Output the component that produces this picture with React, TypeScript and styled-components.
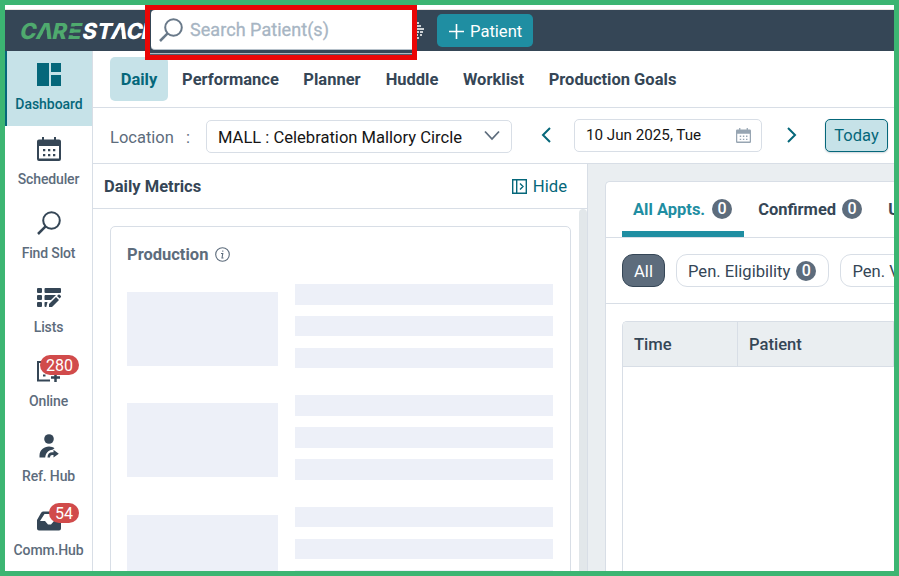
import React from "react";
import styled, { createGlobalStyle, css } from "styled-components";

const c = {
  navy: "#354656",
  teal: "#1f8ea2",
  deep: "#05677a",
  pale: "#c6e2e8",
  line: "#d8dee6",
  slate: "#5d6c7c",
  grey: "#eaeef1",
  skeleton: "#edf0f8",
};

const GlobalStyle = createGlobalStyle`
  * { box-sizing: border-box; }
  body { margin: 0; font-family: Roboto, "Liberation Sans", sans-serif; color: ${c.navy}; }
  svg { display: block; flex: none; }
`;

const Frame = styled.div`
  position: relative;
  width: 899px;
  height: 576px;
  border: 5px solid #3cb572;
  background: #fff;
  overflow: hidden;
  display: flex;
  flex-direction: column;
  white-space: nowrap;
`;

const Header = styled.header`
  flex: none;
  height: 46px;
  border-top: 4px solid #fff;
  background: ${c.navy};
  box-shadow: inset 0 1px 0 #ebe7e2;
  display: flex;
  align-items: center;
  padding: 1px 0 0 14px;
`;

const HeaderMenu = styled.div`
  margin-left: 250px;
  width: 8px;
`;

const AddPatient = styled.button`
  margin-left: 12px;
  width: 96px;
  height: 33px;
  border: 0;
  border-radius: 5px;
  background: ${c.teal};
  color: #fff;
  font: 400 16.6px Roboto, sans-serif;
  display: flex;
  align-items: center;
  gap: 6px;
  padding: 1px 0 0 12px;
`;

const SearchCallout = styled.div`
  position: absolute;
  left: 140px;
  top: 0;
  width: 272px;
  height: 55px;
  border: 5px solid #ea0606;
  background: linear-gradient(${c.navy} 0 43px, #aeb8c0 43px 44px, #4f606e 44px);
`;

const SearchField = styled.div`
  margin-left: 1px;
  height: 40px;
  background: #fff;
  border-bottom: 1px solid #b6c1ca;
  border-radius: 4px 0 0 4px;
  display: flex;
  align-items: center;
  gap: 7px;
  padding-left: 8px;
  color: #a7b5c3;
  font-size: 18px;
  letter-spacing: 0.05px;
  -webkit-text-stroke: 0.3px #a7b5c3;
`;

const Body = styled.div`
  flex: 1;
  display: flex;
  min-height: 0;
`;

const Sidebar = styled.nav`
  flex: none;
  width: 88px;
  border-right: 1px solid ${c.line};
  padding-bottom: 8px;
`;

const NavItem = styled.a<{ $active?: boolean }>`
  position: relative;
  height: ${(p) => (p.$active ? 75 : 74.15)}px;
  display: flex;
  flex-direction: column;
  align-items: center;
  padding-top: 11px;
  gap: ${(p) => (p.$active ? 6 : 8)}px;
  font-size: 14px;
  letter-spacing: ${(p) => (p.$active ? -0.05 : -0.15)}px;
  line-height: 20px;
  font-weight: 500;
  color: ${(p) => (p.$active ? c.deep : c.slate)};
  ${(p) => p.$active && css`padding-left: 1px; background: ${c.pale}; box-shadow: inset 2px 0 ${c.deep};`}
`;

const NavBadge = styled.span`
  position: absolute;
  right: 13px;
  top: 6.4px;
  height: 20px;
  padding: 0 6px;
  border-radius: 10px;
  background: #d14b4b;
  color: #fff;
  font-size: 16px;
  letter-spacing: 0;
  font-weight: 400;
  line-height: 21px;
`;

const Main = styled.main`
  flex: 1;
  min-width: 0;
  display: flex;
  flex-direction: column;
`;

const Tabs = styled.div`
  flex: none;
  height: 57px;
  padding: 0 0 0 17px;
  border-bottom: 1px solid ${c.line};
  display: flex;
  align-items: center;
`;

const Tab = styled.a<{ $active?: boolean; $w: number }>`
  width: ${(p) => p.$w}px;
  height: 44px;
  border-radius: 5px;
  line-height: 45px;
  text-align: center;
  font-size: 16.5px;
  font-weight: 700;
  color: ${(p) => (p.$active ? c.deep : c.navy)};
  background: ${(p) => (p.$active ? c.pale : "transparent")};
`;

const Toolbar = styled.div`
  flex: none;
  height: 56px;
  border-bottom: 1px solid ${c.line};
  padding-left: 17px;
  display: flex;
  align-items: center;
`;

const Label = styled.span`
  width: 96px;
  padding-top: 4px;
  color: ${c.slate};
  font-size: 16.5px;
  word-spacing: 8px;
`;

const Field = styled.div<{ $w: number; $size: number; $date?: boolean }>`
  width: ${(p) => p.$w}px;
  height: 33px;
  margin-top: ${(p) => (p.$date ? -1 : 1)}px;
  border: 1px solid ${c.line};
  border-radius: 5px;
  padding: ${(p) => (p.$date ? "0 10px 0 11px" : "2px 11px 0")};
  display: flex;
  align-items: center;
  justify-content: space-between;
  font-size: ${(p) => p.$size}px;
  color: #151515;
`;

const Arrow = styled.svg<{ $next?: boolean }>`
  margin: ${(p) => (p.$next ? "-2px 28px 0 25px" : "-2px 23px 0 29px")};
`;

const Today = styled.button`
  width: 63px;
  height: 33px;
  margin-top: -1px;
  border: 1px solid ${c.deep};
  border-radius: 5px;
  background: ${c.pale};
  color: ${c.deep};
  padding: 0;
  font: 400 16.5px Roboto, sans-serif;
  box-shadow: 0 1px 2px #cbd3d9;
`;

const Content = styled.div`
  flex: 1;
  min-height: 0;
  display: flex;
`;

const Metrics = styled.section`
  flex: none;
  width: 495px;
  border-right: 1px solid ${c.line};
  display: flex;
  flex-direction: column;
`;

const MetricsHeader = styled.div`
  flex: none;
  height: 45px;
  border-bottom: 1px solid ${c.line};
  padding: 0 20px 0 11px;
  display: flex;
  align-items: center;
  justify-content: space-between;
  font-size: 16.5px;
  font-weight: 700;
`;

const Hide = styled.a`
  display: flex;
  align-items: center;
  gap: 6px;
  color: ${c.deep};
  font-size: 16.7px;
  font-weight: 400;
`;

const MetricsBody = styled.div`
  flex: 1;
  min-height: 0;
  overflow: hidden;
  display: flex;
`;

const MetricsCard = styled.div`
  margin: 17px 8px 0 17px;
  width: 461px;
  height: 500px;
  border: 1px solid ${c.line};
  border-radius: 5px;
  padding: 18px 17px 0 16px;
`;

const CardTitle = styled.h3`
  margin: 0 0 20px;
  height: 19px;
  display: flex;
  align-items: center;
  gap: 7px;
  color: ${c.slate};
  font-size: 16.5px;
  font-weight: 700;
`;

const SkeletonGroup = styled.div`
  height: 111.45px;
  padding-top: 8px;
  display: flex;
  justify-content: space-between;
`;

const SkeletonBlock = styled.div`
  width: 151px;
  height: 74px;
  background: ${c.skeleton};
`;

const SkeletonBars = styled.div`
  width: 258px;
  margin-top: -8px;
  display: flex;
  flex-direction: column;
  gap: 11.3px;
`;

const SkeletonBar = styled.div`
  height: 20.5px;
  background: ${c.skeleton};
`;

const ScrollThumb = styled.div`
  flex: none;
  width: 8px;
  background: #e2e7ea;
  border-radius: 4px 4px 0 0;
`;

const ApptArea = styled.section`
  flex: 1;
  min-width: 0;
  background: ${c.grey};
  padding: 17px 0 0 17px;
  display: flex;
`;

const ApptCard = styled.div`
  flex: 1;
  min-width: 0;
  overflow: hidden;
  background: #fff;
  border: solid ${c.line};
  border-width: 1px 0 0 1px;
  border-radius: 5px 0 0 0;
`;

const ApptTabs = styled.div`
  height: 56px;
  border-bottom: 1px solid ${c.line};
  padding-left: 16px;
  display: flex;
`;

const ApptTab = styled.a<{ $active?: boolean }>`
  flex: none;
  height: 55px;
  padding: 5px 12px 0 ${(p) => (p.$active ? 11 : 14)}px;
  border-bottom: 6px solid ${(p) => (p.$active ? c.teal : "transparent")};
  display: flex;
  align-items: center;
  gap: ${(p) => (p.$active ? 7 : 6)}px;
  font-size: 16.5px;
  font-weight: 700;
  color: ${(p) => (p.$active ? c.teal : c.navy)};
`;

const Count = styled.span`
  width: 20px;
  height: 20px;
  border-radius: 50%;
  background: ${c.slate};
  color: #fff;
  text-align: center;
  font-size: 16px;
  font-weight: 500;
  line-height: 20px;
`;

const Filters = styled.div`
  height: 66px;
  border-bottom: 1px solid ${c.line};
  padding: 16px 0 0 16px;
  display: flex;
  gap: 11px;
`;

const Chip = styled.button<{ $active?: boolean }>`
  flex: none;
  height: 33px;
  padding: 1px 12px 0 11px;
  ${(p) => p.$active && css`width: 43px; padding: 1px 0 0; justify-content: center;`}
  border: 1px solid ${(p) => (p.$active ? c.navy : c.line)};
  border-radius: 11px;
  background: ${(p) => (p.$active ? c.slate : "#fff")};
  color: ${(p) => (p.$active ? "#fff" : c.navy)};
  font: 400 16.6px Roboto, sans-serif;
  display: flex;
  align-items: center;
  gap: 6px;
`;

const Table = styled.div`
  margin: 17px 0 0 16px;
  height: 400px;
  border: solid ${c.line};
  border-width: 1px 0 0 1px;
  border-radius: 5px 0 0 0;
  overflow: hidden;
`;

const TableHead = styled.div`
  display: grid;
  grid-template-columns: 115px 1fr;
  height: 45px;
  background: ${c.grey};
  border-bottom: 1px solid ${c.line};
`;

const HeadCell = styled.div`
  border-right: 1px solid ${c.line};
  padding-left: 11px;
  line-height: 45px;
  font-size: 16.6px;
  font-weight: 500;
`;

const Logo = () => (
  <svg width="148" height="24" viewBox="0 0 148 24" fontFamily="Inter" fontWeight="800" fontSize="22">
    <g transform="translate(5 0) skewX(-12)">
      <g fill="#4faa6e">
        <text y="20" x="-0.7 15.2 31.6 47.2">CARE</text>
      </g>
      <g fill="#fff">
        <text y="20" x="61.4 76.2 90 105.500 120.500">STACK</text>
      </g>
      <g fill={c.navy}>
        <path d="M19.900 20.500 L22.800 11 L24.800 11 L27.800 20.500Z" />
        <path d="M94.700 20.500 L97.600 11 L99.600 11 L102.600 20.500Z" />
        <rect x="47.500" y="7.400" width="14" height="2.200" />
        <rect x="47.500" y="14" width="14" height="2.300" />
      </g>
    </g>
  </svg>
);

const Magnifier = ({ size, color, w = 2 }: { size: number; color: string; w?: number }) => (
  <svg width={size} height={size} viewBox="0 0 24 24" fill="none" stroke={color} strokeWidth={w}>
    <circle cx="14.5" cy="9.5" r="8.3" />
    <path d="M8.6 15.4 1 23" strokeWidth={w * 1.25} />
  </svg>
);

const DashboardIcon = () => (
  <svg width="24" height="26" viewBox="0 0 24 26" fill={c.deep}>
    <path d="M0 1h12v23H0zM14 1h10v9H14zM14 13h10v11H14z" />
  </svg>
);

const CalendarIcon = ({ size, color }: { size: number; color: string }) => (
  <svg width={size} height={size} viewBox="0 0 24 24" fill={color}>
    <path fillRule="evenodd" d="M2 2.5h3V0h2v2.5h10V0h2v2.5h3a2 2 0 0 1 2 2V22a2 2 0 0 1-2 2H2a2 2 0 0 1-2-2V4.500a2 2 0 0 1 2-2ZM2 9v12.500h20V9Z" />
    <path d="M6 12h2.300v2.300H6zM11 12h2.300v2.300H11zM16 12h2.300v2.300H16zM6 17h2.300v2.300H6zM11 17h2.300v2.300H11zM16 17h2.300v2.300H16z" />
  </svg>
);

const ListsIcon = () => (
  <svg width="24" height="24" viewBox="0 0 24 24" fill={c.navy}>
    <rect y="3" width="5" height="5" rx="1" />
    <rect y="10" width="5" height="5" rx="1" />
    <rect y="17" width="5" height="5" rx="1" />
    <rect x="7.500" y="3" width="16.500" height="5" rx="1" />
    <path d="M8 10h11l-5 5H8a1 1 0 0 1-.5-1v-3zM8 17h2.500L9.300 22H8.500a1 1 0 0 1-1-1v-3.500zM12 19l7-7 3 3-7 7h-3zM20 11l1.300-1.200a1 1 0 0 1 1.400 0l1 1a1 1 0 0 1 0 1.400L22.700 13.500z" />
  </svg>
);

const OnlineIcon = () => (
  <svg width="24" height="24" viewBox="0 0 24 24" fill="none" stroke={c.navy} strokeWidth="2">
    <path d="M4 3H1v18.500h12" />
    <path d="M14 18.500h9M18.500 14v9" strokeWidth="2.500" />
    <path d="M6 16.500h2.500" />
  </svg>
);

const ReferralIcon = () => (
  <svg width="24" height="24" viewBox="0 0 24 24" fill={c.navy}>
    <circle cx="12" cy="5" r="4.800" />
    <path d="M2.500 23.500v-2c0-5.500 4.500-9 9.500-9 2.300 0 4.200.7 5.500 1.800l-2 1.500c-4.500.5-6.800 3.500-7.300 7.700z" />
    <path d="M10.500 23.500c0-3.500 2-5.300 4.700-5.300h1.300v-2.500l5.300 4-5.300 3.700v-2.300h-1.200c-1.400 0-2 .7-2.300 2.400z" />
  </svg>
);

const InboxIcon = () => (
  <svg width="24" height="24" viewBox="0 0 24 24" fill={c.navy}>
    <path fillRule="evenodd" d="M6 3.500h12L24 14v6.500a2 2 0 0 1-2 2H2a2 2 0 0 1-2-2V12L4 5a3 3 0 0 1 2-1.500ZM7.500 6 3 13h5l3 3.500h3L17 13h4l-4-7Z" />
  </svg>
);

const Chevron = ({ w, h, d, color }: { w: number; h: number; d: string; color: string }) => (
  <svg width={w} height={h} viewBox={`0 0 ${w} ${h}`} fill="none" stroke={color} strokeWidth="1.8"><path d={d} /></svg>
);

const navItems = [
  { label: "Dashboard", icon: <DashboardIcon />, active: true },
  { label: "Scheduler", icon: <CalendarIcon size={24} color={c.navy} /> },
  { label: "Find Slot", icon: <Magnifier size={24} color={c.navy} /> },
  { label: "Lists", icon: <ListsIcon /> },
  { label: "Online", icon: <OnlineIcon />, badge: 280 },
  { label: "Ref. Hub", icon: <ReferralIcon /> },
  { label: "Comm.Hub", icon: <InboxIcon />, badge: 54 },
];

const tabs: [string, number][] = [
  ["Daily", 58], ["Performance", 125], ["Planner", 78], ["Huddle", 82], ["Worklist", 81], ["Production Goals", 157],
];

export default function App() {
  return (
    <>
      <GlobalStyle />
      <Frame>
        <Header>
          <Logo />
          <HeaderMenu>
            <svg width="8" height="20" viewBox="0 0 8 20" stroke="#fff" strokeWidth="1.6">
              <path d="M0 2h2M0 5h4M0 8h7M0 11h2M3 11h3M0 14h1M3 14h2M0 17h2" />
            </svg>
          </HeaderMenu>
          <AddPatient>
            <svg width="15" height="15" viewBox="0 0 15 15" stroke="#fff" strokeWidth="1.6"><path d="M0 7.500h15M7.500 0v15" /></svg>
            Patient
          </AddPatient>
        </Header>
        <Body>
          <Sidebar>
            {navItems.map((n) => (
              <NavItem key={n.label} $active={n.active}>
                {n.icon}
                {n.label}
                {n.badge && <NavBadge>{n.badge}</NavBadge>}
              </NavItem>
            ))}
          </Sidebar>
          <Main>
            <Tabs>
              {tabs.map(([t, w], i) => <Tab key={t} $w={w} $active={i === 0}>{t}</Tab>)}
            </Tabs>
            <Toolbar>
              <Label>Location :</Label>
              <Field $w={306} $size={16.57}>
                MALL : Celebration Mallory Circle
                <Chevron w={16} h={14} d="M1 1.500 8 9l7-7.500" color={c.slate} />
              </Field>
              <Arrow width="10" height="16" viewBox="0 0 10 16" fill="none" stroke={c.deep} strokeWidth="2"><path d="M9 1 2 8l7 7" /></Arrow>
              <Field $w={188} $size={15.2} $date>
                10 Jun 2025, Tue
                <CalendarIcon size={15} color="#97a5b2" />
              </Field>
              <Arrow $next width="10" height="16" viewBox="0 0 10 16" fill="none" stroke={c.deep} strokeWidth="2"><path d="m1 1 7 7-7 7" /></Arrow>
              <Today>Today</Today>
            </Toolbar>
            <Content>
              <Metrics>
                <MetricsHeader>
                  Daily Metrics
                  <Hide>
                    <svg width="15" height="15" viewBox="0 0 15 15" fill="none" stroke={c.deep} strokeWidth="1.4"><path d="M.7.700h13.600v13.600H.7zM4.700 1v13M8 4.500l3 3-3 3" /></svg>
                    Hide
                  </Hide>
                </MetricsHeader>
                <MetricsBody>
                  <MetricsCard>
                    <CardTitle>
                      Production
                      <svg width="15" height="15" viewBox="0 0 15 15" fill="none" stroke={c.slate} strokeWidth="1.1"><circle cx="7.500" cy="7.500" r="6.800" /><path d="M6 6.500h1.800L7 11h1.500M7.800 3.500v1.300" /></svg>
                    </CardTitle>
                    {[0, 1, 2].map((g) => (
                      <SkeletonGroup key={g}>
                        <SkeletonBlock />
                        <SkeletonBars><SkeletonBar /><SkeletonBar /><SkeletonBar /></SkeletonBars>
                      </SkeletonGroup>
                    ))}
                  </MetricsCard>
                  <ScrollThumb />
                </MetricsBody>
              </Metrics>
              <ApptArea>
                <ApptCard>
                  <ApptTabs>
                    <ApptTab $active>All Appts.<Count>0</Count></ApptTab>
                    <ApptTab>Confirmed<Count>0</Count></ApptTab>
                    <ApptTab>Unconfirmed</ApptTab>
                  </ApptTabs>
                  <Filters>
                    <Chip $active>All</Chip>
                    <Chip>Pen. Eligibility<Count>0</Count></Chip>
                    <Chip>Pen. Verification</Chip>
                  </Filters>
                  <Table>
                    <TableHead><HeadCell>Time</HeadCell><HeadCell>Patient</HeadCell></TableHead>
                  </Table>
                </ApptCard>
              </ApptArea>
            </Content>
          </Main>
        </Body>
        <SearchCallout>
          <SearchField>
            <Magnifier size={24} color="#697989" />
            Search Patient(s)
          </SearchField>
        </SearchCallout>
      </Frame>
    </>
  );
}
